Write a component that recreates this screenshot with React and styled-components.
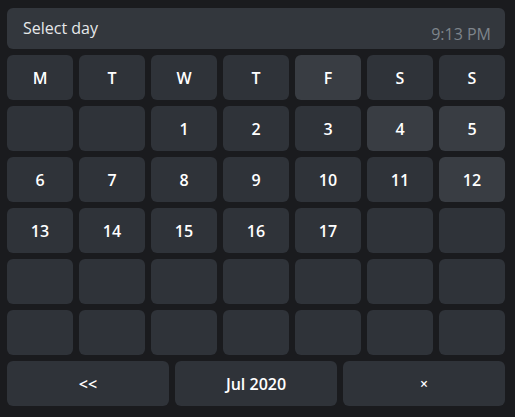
import React from 'react';
import styled, { createGlobalStyle } from 'styled-components';

const GlobalStyle = createGlobalStyle`
    html, body {
        margin: 0;
        padding: 0;
        background-color: #1a1b1e;
    }
    body {
        font-family: "Open Sans", "Noto Sans", sans-serif;
    }
`

const weekdays = ['M', 'T', 'W', 'T', 'F', 'S', 'S'];

// July 2020 starts on Wednesday, only up to the 17th is shown
const days = [
    null, null, 1, 2, 3, 4, 5,
    6, 7, 8, 9, 10, 11, 12,
    13, 14, 15, 16, 17, null, null,
    null, null, null, null, null, null, null,
    null, null, null, null, null, null, null,
];

const lit = [4, 5, 12];

function App() {
    return (
        <>
            <GlobalStyle />
            <Container>
                <Header>
                    <Title>Select day</Title>
                    <Time>9:13 PM</Time>
                </Header>

                <Grid>
                    {weekdays.map((d, i) => (
                        <Cell key={'w' + i} $lit={d === 'F' && i === 4}>
                            {d}
                        </Cell>
                    ))}
                    {days.map((d, i) => (
                        <Cell key={'d' + i} $lit={lit.includes(d)}>
                            {d}
                        </Cell>
                    ))}
                </Grid>

                <Footer>
                    <Cell>&lt;&lt;</Cell>
                    <Cell>Jul 2020</Cell>
                    <Cell $small>×</Cell>
                </Footer>
            </Container>
        </>
    )
}

export default App

const Container = styled.div`
    width: 498px;
    padding: 8px 10px 11px 7px;
    display: flex;
    flex-direction: column;
    gap: 6px;
`

const Header = styled.div`
    height: 41px;
    box-sizing: border-box;
    background-color: #33373d;
    border-radius: 6px;
    padding: 0 14px 0 16px;
    display: flex;
    justify-content: space-between;
`

const Title = styled.span`
    color: #e6e8ea;
    font-size: 16px;
    line-height: 40px;
`

const Time = styled.span`
    color: #7e848b;
    font-size: 16px;
    align-self: flex-end;
    line-height: 27px;
    padding-bottom: 1px;
`

const Grid = styled.div`
    display: grid;
    grid-template-columns: repeat(7, 66px);
    grid-auto-rows: 45px;
    column-gap: 6px;
    row-gap: 6px;
`

const Cell = styled.div`
    background-color: ${p => (p.$lit ? '#393d43' : '#2f3339')};
    border-radius: 6px;
    color: #ffffff;
    font-size: ${p => (p.$small ? '14px' : '16px')};
    font-weight: 600;
    display: flex;
    align-items: center;
    justify-content: center;
    height: 45px;
`

const Footer = styled.div`
    display: grid;
    grid-template-columns: repeat(3, 162px);
    column-gap: 6px;
`
